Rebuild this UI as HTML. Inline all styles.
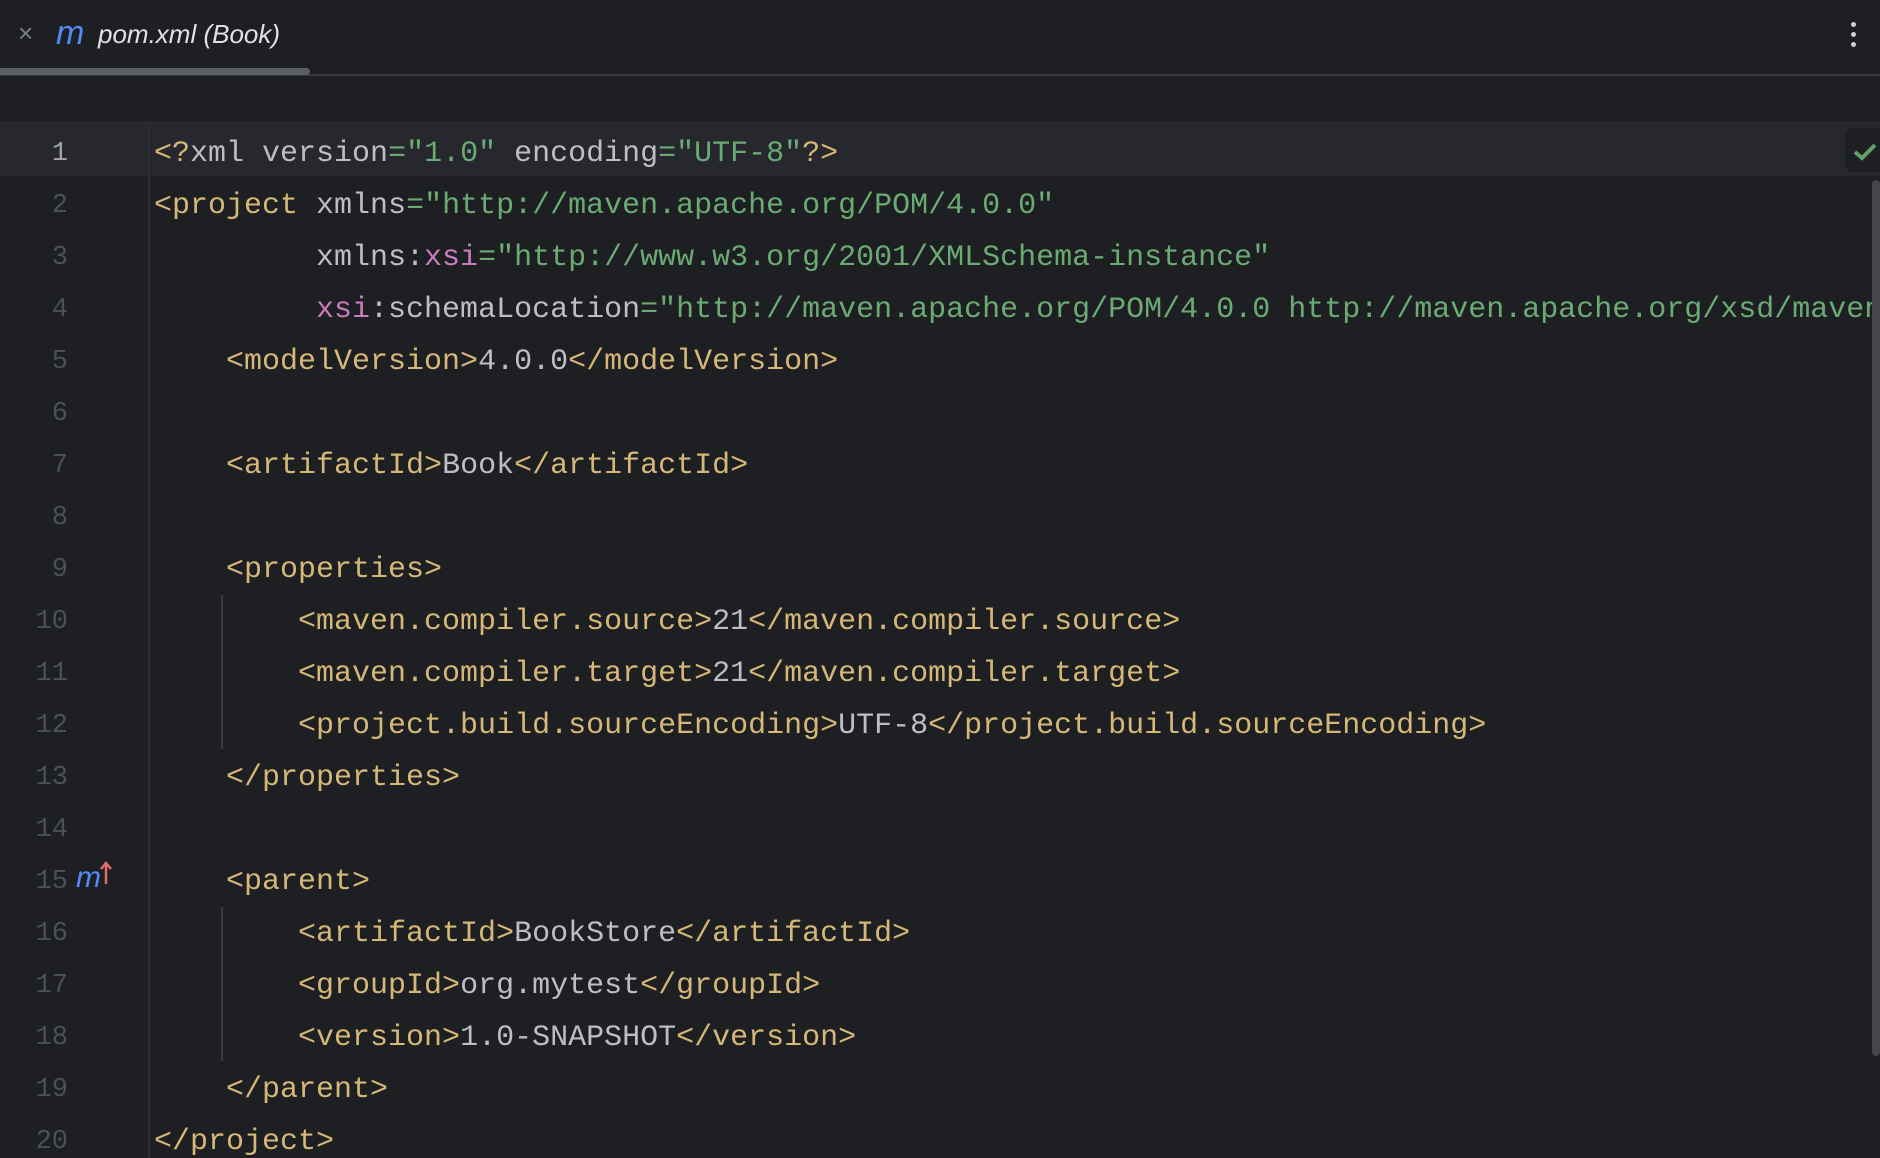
<!DOCTYPE html>
<html><head><meta charset="utf-8"><style>
html,body{margin:0;width:1880px;height:1158px;overflow:hidden}
body{background:#1e1f22;font-family:"Liberation Mono",monospace}
#w{position:relative;width:1880px;height:1158px;overflow:hidden}
.tabbar{position:absolute;left:0;top:0;width:1880px;height:74px;border-bottom:2px solid #393b40;background:#1e1f22}
.ul{position:absolute;left:0;top:68px;width:310px;height:7px;background:#5b5e64;border-radius:0 4px 4px 0}
.tab{position:absolute;left:98px;top:19px;font:italic 26px "Liberation Sans",sans-serif;color:#dfe1e5}
.mi{position:absolute;left:56px;top:14px;font:italic 34px "Liberation Sans",sans-serif;color:#548af7}
.x{position:absolute;left:18px;top:18px;font:26px "Liberation Sans",sans-serif;color:#7a7e85}
.dots{position:absolute;left:1851px;top:22px}
.dots i{display:block;width:5px;height:5px;border-radius:50%;background:#ced0d6;margin-bottom:5px}
.ed{position:absolute;left:0;top:122px;width:1880px;height:1036px;border-top:2px solid #2b2d30}
.gut{position:absolute;left:148px;top:124px;width:2px;height:1034px;background:#2b2d30}
.cur{position:absolute;left:0;top:124px;width:1880px;height:52px;background:#26282e}
.ln{position:absolute;left:0;width:68px;text-align:right;font-size:27px;color:#4b5059;line-height:52px;margin-top:3px}
.code{position:absolute;left:154px;font-size:30px;line-height:52px;white-space:pre;color:#bcbec4;margin-top:3px}
.t{color:#d5b778}.v{color:#6aab73}.n{color:#c77dbb}
.guide{position:absolute;left:221px;width:2px;background:#393b40}
.chk{position:absolute;left:1845px;top:128px;width:40px;height:44px;background:#1e1f22;border-radius:8px;z-index:2}
.sb{position:absolute;left:1872px;top:180px;width:8px;height:876px;background:#45474c;border-radius:4px;z-index:2}
</style></head><body><div id="w">
<div class="tabbar"></div><div class="ul"></div>
<div class="x">×</div><div class="mi">m</div><div class="tab">pom.xml (Book)</div>
<div class="dots"><i></i><i></i><i></i></div>
<div class="ed"></div><div class="cur"></div><div class="gut"></div>
<div class="guide" style="top:595px;height:154px"></div>
<div class="guide" style="top:907px;height:154px"></div>
<div class="ln" style="top:125px;color:#a1a3ab">1</div>
<div class="ln" style="top:177px">2</div>
<div class="ln" style="top:229px">3</div>
<div class="ln" style="top:281px">4</div>
<div class="ln" style="top:333px">5</div>
<div class="ln" style="top:385px">6</div>
<div class="ln" style="top:437px">7</div>
<div class="ln" style="top:489px">8</div>
<div class="ln" style="top:541px">9</div>
<div class="ln" style="top:593px">10</div>
<div class="ln" style="top:645px">11</div>
<div class="ln" style="top:697px">12</div>
<div class="ln" style="top:749px">13</div>
<div class="ln" style="top:801px">14</div>
<div class="ln" style="top:853px">15</div>
<div class="ln" style="top:905px">16</div>
<div class="ln" style="top:957px">17</div>
<div class="ln" style="top:1009px">18</div>
<div class="ln" style="top:1061px">19</div>
<div class="ln" style="top:1113px">20</div>
<div style="position:absolute;left:76px;top:861px;font:italic 30px 'Liberation Sans',sans-serif;color:#548af7">m</div>
<svg style="position:absolute;left:98px;top:860px" width="16" height="26"><path d="M8 24 V3 M3 9 L8 3 L13 9" stroke="#e06c6c" stroke-width="2.5" fill="none"/></svg>
<div class="code" style="top:125px"><span class="t">&lt;?</span>xml version<span class="v">="1.0"</span> encoding<span class="v">="UTF-8"</span><span class="t">?&gt;</span></div>
<div class="code" style="top:177px"><span class="t">&lt;project</span> xmlns<span class="v">="http://maven.apache.org/POM/4.0.0"</span></div>
<div class="code" style="top:229px">         xmlns:<span class="n">xsi</span><span class="v">="http://www.w3.org/2001/XMLSchema-instance"</span></div>
<div class="code" style="top:281px">         <span class="n">xsi</span>:schemaLocation<span class="v">="http://maven.apache.org/POM/4.0.0 http://maven.apache.org/xsd/maven-4.0.0.xsd"</span></div>
<div class="code" style="top:333px">    <span class="t">&lt;modelVersion&gt;</span>4.0.0<span class="t">&lt;/modelVersion&gt;</span></div>
<div class="code" style="top:437px">    <span class="t">&lt;artifactId&gt;</span>Book<span class="t">&lt;/artifactId&gt;</span></div>
<div class="code" style="top:541px">    <span class="t">&lt;properties&gt;</span></div>
<div class="code" style="top:593px">        <span class="t">&lt;maven.compiler.source&gt;</span>21<span class="t">&lt;/maven.compiler.source&gt;</span></div>
<div class="code" style="top:645px">        <span class="t">&lt;maven.compiler.target&gt;</span>21<span class="t">&lt;/maven.compiler.target&gt;</span></div>
<div class="code" style="top:697px">        <span class="t">&lt;project.build.sourceEncoding&gt;</span>UTF-8<span class="t">&lt;/project.build.sourceEncoding&gt;</span></div>
<div class="code" style="top:749px">    <span class="t">&lt;/properties&gt;</span></div>
<div class="code" style="top:853px">    <span class="t">&lt;parent&gt;</span></div>
<div class="code" style="top:905px">        <span class="t">&lt;artifactId&gt;</span>BookStore<span class="t">&lt;/artifactId&gt;</span></div>
<div class="code" style="top:957px">        <span class="t">&lt;groupId&gt;</span>org.mytest<span class="t">&lt;/groupId&gt;</span></div>
<div class="code" style="top:1009px">        <span class="t">&lt;version&gt;</span>1.0-SNAPSHOT<span class="t">&lt;/version&gt;</span></div>
<div class="code" style="top:1061px">    <span class="t">&lt;/parent&gt;</span></div>
<div class="code" style="top:1113px"><span class="t">&lt;/project&gt;</span></div>
<div class="chk"><svg width="40" height="44"><path d="M10 24 L17 30 L30 17" stroke="#5fa069" stroke-width="4" fill="none"/></svg></div>
<div class="sb"></div>
</div></body></html>
